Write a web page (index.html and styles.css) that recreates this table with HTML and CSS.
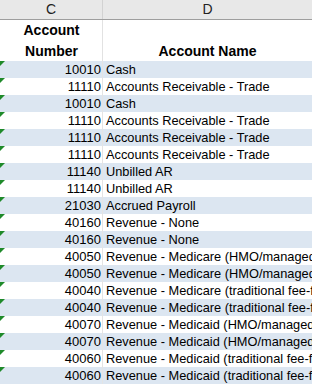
FILE: index.html
```html
<!DOCTYPE html>
<html lang="en">
<head>
<meta charset="utf-8">
<title>Accounts</title>
<link rel="stylesheet" href="styles.css">
</head>
<body>
<div class="sheet">
  <div class="colhead">
    <div class="ch c">C</div>
    <div class="ch d">D</div>
  </div>
  <div class="hdr">
    <div class="hc">Account<br>Number</div>
    <div class="hd">Account Name</div>
  </div>
  <div class="row band"><div class="num">10010</div><div class="name">Cash</div></div>
  <div class="row"><div class="num">11110</div><div class="name">Accounts Receivable - Trade</div></div>
  <div class="row band"><div class="num">10010</div><div class="name">Cash</div></div>
  <div class="row"><div class="num">11110</div><div class="name">Accounts Receivable - Trade</div></div>
  <div class="row band"><div class="num">11110</div><div class="name">Accounts Receivable - Trade</div></div>
  <div class="row"><div class="num">11110</div><div class="name">Accounts Receivable - Trade</div></div>
  <div class="row band"><div class="num">11140</div><div class="name">Unbilled AR</div></div>
  <div class="row"><div class="num">11140</div><div class="name">Unbilled AR</div></div>
  <div class="row band"><div class="num">21030</div><div class="name">Accrued Payroll</div></div>
  <div class="row"><div class="num">40160</div><div class="name">Revenue - None</div></div>
  <div class="row band"><div class="num">40160</div><div class="name">Revenue - None</div></div>
  <div class="row"><div class="num">40050</div><div class="name">Revenue - Medicare (HMO/managed care)</div></div>
  <div class="row band"><div class="num">40050</div><div class="name">Revenue - Medicare (HMO/managed care)</div></div>
  <div class="row"><div class="num">40040</div><div class="name">Revenue - Medicare (traditional fee-for-service)</div></div>
  <div class="row band"><div class="num">40040</div><div class="name">Revenue - Medicare (traditional fee-for-service)</div></div>
  <div class="row"><div class="num">40070</div><div class="name">Revenue - Medicaid (HMO/managed care)</div></div>
  <div class="row band"><div class="num">40070</div><div class="name">Revenue - Medicaid (HMO/managed care)</div></div>
  <div class="row"><div class="num">40060</div><div class="name">Revenue - Medicaid (traditional fee-for-service)</div></div>
  <div class="row band"><div class="num">40060</div><div class="name">Revenue - Medicaid (traditional fee-for-service)</div></div>
</div>
</body>
</html>
```
FILE: styles.css
```css
html, body {
  margin: 0;
  padding: 0;
  background: #ffffff;
}
.sheet {
  width: 312px;
  height: 385px;
  overflow: hidden;
  font-family: "Liberation Sans", Arial, sans-serif;
  color: #000;
}
.colhead {
  display: grid;
  grid-template-columns: 103px 1fr;
  height: 19px;
  background: #e8e8e8;
  border-bottom: 1px solid #9e9e9e;
}
.ch {
  font-size: 14px;
  line-height: 19px;
  text-align: center;
  color: #222;
}
.ch.c {
  box-sizing: border-box;
  border-right: 1px solid #d2d2d2;
}
.hdr {
  display: grid;
  grid-template-columns: 103px 1fr;
  height: 41px;
  font-weight: bold;
  font-size: 14px;
  line-height: 21px;
}
.hc {
  box-sizing: border-box;
  border-right: 1px solid #e2e2e2;
  text-align: center;
  padding-left: 1px;
}
.hd {
  text-align: center;
  padding-top: 21px;
  white-space: nowrap;
}
.row {
  display: grid;
  grid-template-columns: 103px 1fr;
  height: 17px;
  font-size: 13px;
  line-height: 17px;
  white-space: nowrap;
}
.row.band {
  background: #dce6f1;
}
.num {
  position: relative;
  box-sizing: border-box;
  border-right: 1px solid #e4e4e4;
  text-align: right;
  padding-right: 1px;
}
.num::before {
  content: "";
  position: absolute;
  left: 0;
  top: 0;
  width: 0;
  height: 0;
  border-top: 5px solid #1f8a2a;
  border-right: 5px solid transparent;
}
.name {
  padding-left: 3px;
  font-size: 12.8px;
  overflow: visible;
}
```
